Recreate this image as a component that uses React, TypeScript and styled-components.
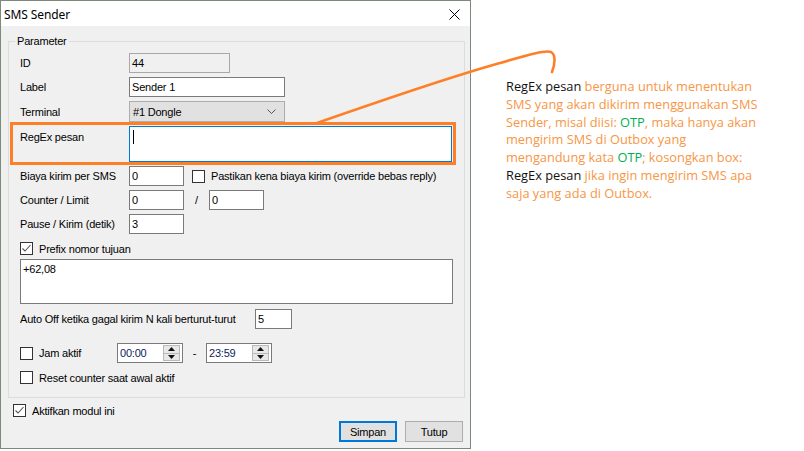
import styled, { createGlobalStyle } from "styled-components";

const GlobalStyle = createGlobalStyle`
  html, body {
    margin: 0;
    padding: 0;
    background: #ffffff;
  }
  body {
    width: 804px;
    height: 451px;
    overflow: hidden;
    font-family: "Liberation Sans", Arial, sans-serif;
    font-size: 11px;
    color: #000;
  }
  * {
    box-sizing: border-box;
  }
`;

const Page = styled.div`
    position: relative;
    display: flex;
    width: 804px;
    height: 451px;
`;

const Window = styled.div`
    width: 471px;
    height: 449px;
    border: 1px solid #7b8a7b;
    background: #f0f0f0;
    display: flex;
    flex-direction: column;
`;

const TitleBar = styled.div`
    height: 25px;
    background: #ffffff;
    display: flex;
    align-items: center;
    justify-content: space-between;
    padding: 0 10px 0 3px;
`;

const Title = styled.span`
    font-family: "Noto Sans", "Open Sans", sans-serif;
    font-size: 12px;
    letter-spacing: -0.1px;
    margin-top: 1px;
`;

const CloseIcon = styled.svg`
    width: 11px;
    height: 11px;
    margin-top: 2px;
`;

const Body = styled.div`
    flex: 1;
    padding: 15px 5px 0 7px;
    display: flex;
    flex-direction: column;
`;

const Group = styled.div`
    border: 1px solid #dcdcdc;
    padding: 0 0 13px 11px;
    display: flex;
    flex-direction: column;
`;

const GroupTitle = styled.div`
    align-self: flex-start;
    height: 14px;
    line-height: 14px;
    margin: -8px 0 0 -5px;
    padding: 0 2px;
    background: #f0f0f0;
    letter-spacing: -0.2px;
`;

const Row = styled.div<{ $top: number }>`
    display: flex;
    align-items: center;
    margin-top: ${(p) => p.$top}px;
    letter-spacing: -0.2px;
`;

const FieldLabel = styled.span<{ $width?: number }>`
    width: ${(p) => p.$width ?? 109}px;
    flex-shrink: 0;
    white-space: nowrap;
`;

const TextBox = styled.div<{ $width: number; $disabled?: boolean }>`
    width: ${(p) => p.$width}px;
    height: 20px;
    border: 1px solid ${(p) => (p.$disabled ? "#a8a8a8" : "#7a7a7a")};
    background: ${(p) => (p.$disabled ? "#f0f0f0" : "#ffffff")};
    padding: 0 2px;
    display: flex;
    align-items: center;
    flex-shrink: 0;
`;

const Select = styled.div`
    width: 156px;
    height: 21px;
    border: 1px solid #adadad;
    background: #e1e1e1;
    padding: 0 8px 0 3px;
    display: flex;
    align-items: center;
    justify-content: space-between;
`;

const Highlight = styled.div`
    display: flex;
    align-items: flex-start;
    width: 446px;
    height: 43px;
    margin: 0 0 0 -10px;
    border: 3px solid #fd7f27;
    padding: 1px 0 0 7px;
    letter-spacing: -0.2px;
`;

const RegexLabel = styled.span`
    width: 109px;
    padding-top: 5px;
    flex-shrink: 0;
`;

const FocusedArea = styled.div`
    width: 323px;
    height: 36px;
    border: 1px solid #0078d7;
    background: #ffffff;
    padding: 3px 0 0 3px;
`;

const Caret = styled.div`
    width: 1px;
    height: 14px;
    background: #000;
`;

const MultiLine = styled.div`
    width: 433px;
    height: 45px;
    margin-top: 4px;
    border: 1px solid #7a7a7a;
    background: #ffffff;
    padding: 3px 2px;
    letter-spacing: -0.2px;
`;

const CheckItem = styled.label<{ $width?: number }>`
    display: flex;
    align-items: center;
    gap: 6px;
    width: ${(p) => (p.$width ? `${p.$width}px` : "auto")};
    flex-shrink: 0;
    white-space: nowrap;
`;

const Box = styled.span`
    width: 13px;
    height: 13px;
    border: 1px solid #333333;
    background: #ffffff;
    display: flex;
    align-items: center;
    justify-content: center;
`;

const Slash = styled.span`
    width: 25px;
    text-align: center;
`;

const TimePicker = styled.div`
    width: 66px;
    height: 20px;
    border: 1px solid #7a7a7a;
    background: #ffffff;
    display: flex;
    align-items: center;
    justify-content: space-between;
    padding: 0 2px 0 2px;
    color: #0c1c5c;
`;

const Spin = styled.div`
    width: 17px;
    height: 16px;
    border: 1px solid #b9b9b9;
    background: #e8e8e8;
    display: flex;
    flex-direction: column;
`;

const SpinHalf = styled.div<{ $down?: boolean }>`
    flex: 1;
    display: flex;
    align-items: center;
    justify-content: center;
    border-top: ${(p) => (p.$down ? "1px solid #b9b9b9" : "none")};
`;

const Dash = styled.span`
    width: 23px;
    text-align: center;
`;

const Footer = styled.div`
    display: flex;
    flex-direction: column;
    letter-spacing: -0.2px;
`;

const ModuleCheck = styled.div`
    margin: 6px 0 0 5px;
`;

const Buttons = styled.div`
    display: flex;
    justify-content: flex-end;
    gap: 8px;
    margin: 4px 2px 0 0;
`;

const Button = styled.button<{ $primary?: boolean }>`
    width: 58px;
    height: 21px;
    padding: 0;
    font-family: inherit;
    font-size: 11px;
    letter-spacing: -0.2px;
    color: #000;
    background: #e1e1e1;
    border: ${(p) => (p.$primary ? "2px solid #0078d7" : "1px solid #adadad")};
`;

const Note = styled.div`
    padding: 78px 0 0 35px;
    font-family: "Open Sans", "Noto Sans", sans-serif;
    font-size: 12.8px;
    line-height: 17.8px;
    color: #f79646;
    white-space: nowrap;
`;

const Dark = styled.span`
    color: #111111;
`;

const Green = styled.span`
    color: #00b050;
`;

const Arrow = styled.svg`
    position: absolute;
    left: 0;
    top: 0;
    pointer-events: none;
`;

const Check = ({ checked }: { checked?: boolean }) => (
    <Box>
        {checked && (
            <svg width="11" height="11" viewBox="0 0 11 11">
                <polyline points="1.5,5.5 4,8 9.5,2" fill="none" stroke="#555" strokeWidth="1.1" />
            </svg>
        )}
    </Box>
);

const Spinner = () => (
    <Spin>
        <SpinHalf>
            <svg width="7" height="4" viewBox="0 0 7 4"><polygon points="0,4 7,4 3.5,0" fill="#111" /></svg>
        </SpinHalf>
        <SpinHalf $down>
            <svg width="7" height="4" viewBox="0 0 7 4"><polygon points="0,0 7,0 3.5,4" fill="#111" /></svg>
        </SpinHalf>
    </Spin>
);

const App = () => {
    return (
        <Page>
            <GlobalStyle />
            <Window>
                <TitleBar>
                    <Title>SMS Sender</Title>
                    <CloseIcon viewBox="0 0 11 11">
                        <path d="M0.5 0.5 L10.5 10.5 M10.5 0.5 L0.5 10.5" stroke="#000" strokeWidth="1" />
                    </CloseIcon>
                </TitleBar>
                <Body>
                    <Group>
                        <GroupTitle>Parameter</GroupTitle>
                        <Row $top={5}>
                            <FieldLabel>ID</FieldLabel>
                            <TextBox $width={101} $disabled>44</TextBox>
                        </Row>
                        <Row $top={4}>
                            <FieldLabel>Label</FieldLabel>
                            <TextBox $width={156}>Sender 1</TextBox>
                        </Row>
                        <Row $top={4}>
                            <FieldLabel>Terminal</FieldLabel>
                            <Select>
                                <span>#1 Dongle</span>
                                <svg width="9" height="5" viewBox="0 0 9 5">
                                    <polyline points="0.5,0.5 4.5,4.5 8.5,0.5" fill="none" stroke="#555" strokeWidth="1" />
                                </svg>
                            </Select>
                        </Row>
                        <Highlight>
                            <RegexLabel>RegEx pesan</RegexLabel>
                            <FocusedArea>
                                <Caret />
                            </FocusedArea>
                        </Highlight>
                        <Row $top={1}>
                            <FieldLabel>Biaya kirim per SMS</FieldLabel>
                            <TextBox $width={55}>0</TextBox>
                            <CheckItem style={{ marginLeft: 8 }}>
                                <Check />
                                Pastikan kena biaya kirim (override bebas reply)
                            </CheckItem>
                        </Row>
                        <Row $top={4}>
                            <FieldLabel>Counter / Limit</FieldLabel>
                            <TextBox $width={55}>0</TextBox>
                            <Slash>/</Slash>
                            <TextBox $width={55}>0</TextBox>
                        </Row>
                        <Row $top={4}>
                            <FieldLabel>Pause / Kirim (detik)</FieldLabel>
                            <TextBox $width={55}>3</TextBox>
                        </Row>
                        <Row $top={8}>
                            <CheckItem>
                                <Check checked />
                                Prefix nomor tujuan
                            </CheckItem>
                        </Row>
                        <MultiLine>+62,08</MultiLine>
                        <Row $top={5}>
                            <FieldLabel $width={235}>Auto Off ketika gagal kirim N kali berturut-turut</FieldLabel>
                            <TextBox $width={37}>5</TextBox>
                        </Row>
                        <Row $top={14}>
                            <CheckItem $width={97}>
                                <Check />
                                Jam aktif
                            </CheckItem>
                            <TimePicker>
                                00:00
                                <Spinner />
                            </TimePicker>
                            <Dash>-</Dash>
                            <TimePicker>
                                23:59
                                <Spinner />
                            </TimePicker>
                        </Row>
                        <Row $top={8}>
                            <CheckItem>
                                <Check />
                                Reset counter saat awal aktif
                            </CheckItem>
                        </Row>
                    </Group>
                    <Footer>
                        <ModuleCheck>
                            <CheckItem>
                                <Check checked />
                                Aktifkan modul ini
                            </CheckItem>
                        </ModuleCheck>
                        <Buttons>
                            <Button $primary>Simpan</Button>
                            <Button>Tutup</Button>
                        </Buttons>
                    </Footer>
                </Body>
            </Window>
            <Note>
                <Dark>RegEx pesan</Dark> berguna untuk menentukan
                <br />
                SMS yang akan dikirim menggunakan SMS
                <br />
                Sender, misal diisi: <Green>OTP</Green>, maka hanya akan
                <br />
                mengirim SMS di Outbox yang
                <br />
                mengandung kata <Green>OTP</Green>; kosongkan box:
                <br />
                <Dark>RegEx pesan</Dark> jika ingin mengirim SMS apa
                <br />
                saja yang ada di Outbox.
            </Note>
            <Arrow width="804" height="451" viewBox="0 0 804 451">
                <path
                    d="M317 123 C 380 101, 450 77, 500 63 C 528 55, 545 50, 551 52 C 556 55, 555 64, 552 72"
                    fill="none"
                    stroke="#fd7f27"
                    strokeWidth="2.6"
                    strokeLinecap="round"
                />
            </Arrow>
        </Page>
    );
};

export default App;
